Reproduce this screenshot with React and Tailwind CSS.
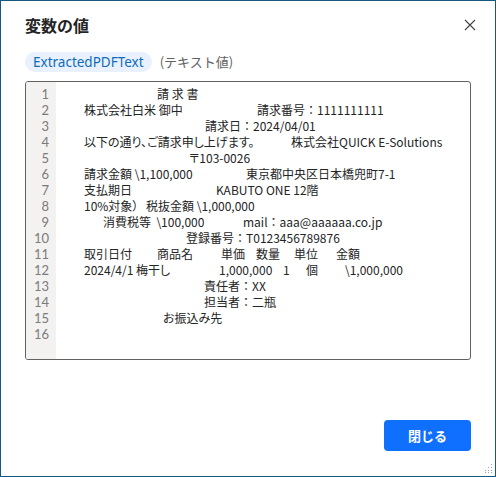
import React from 'react';

const JP = "font-['Noto_Sans_CJK_JP','Noto_Sans',sans-serif]";

// [x position in the dialog, text]
const lines = [
    [[157, '請 求 書']],
    [[84, '株式会社白米 御中'], [257, '請求番号：1111111111']],
    [[205, '請求日：2024/04/01']],
    [[84, '以下の通り、ご請求申し上げます。'], [291, '株式会社QUICK E-Solutions']],
    [[189, '〒103-0026']],
    [[84, '請求金額 \\1,100,000'], [246, '東京都中央区日本橋兜町7-1']],
    [[84, '支払期日'], [216, 'KABUTO ONE 12階']],
    [[84, '10%対象）'], [146, '税抜金額 \\1,000,000']],
    [[103, '消費税等  \\100,000'], [243, 'mail：aaa@aaaaaa.co.jp']],
    [[186, '登録番号：T0123456789876']],
    [[84, '取引日付'], [157, '商品名'], [221, '単価'], [256, '数量'], [294, '単位'], [336, '金額']],
    [[84, '2024/4/1 梅干し'], [219, '1,000,000'], [283, '1'], [306, '個'], [345, '\\1,000,000']],
    [[204, '責任者：XX']],
    [[204, '担当者：二瓶']],
    [[163, 'お振込み先']],
    [],
];

// full-width colon keeps its width, the rest of the kana is proportional
function Seg({ text }) {
    const parts = text.split('：');
    return parts.map((p, i) => (
        <React.Fragment key={i}>
            {i > 0 && <span className="[font-feature-settings:normal]">：</span>}
            {p}
        </React.Fragment>
    ));
}

function TextLine({ segs }) {
    return (
        <div className="flex h-[16px] items-center whitespace-pre leading-[16px]">
            {segs.map(([x, text], i) => {
                const next = segs[i + 1];
                const left = i === 0 ? x - 84 : 0;
                const width = next ? next[0] - x : undefined;
                return (
                    <span key={i} className="shrink-0" style={{ marginLeft: left, width }}>
                        <Seg text={text} />
                    </span>
                );
            })}
        </div>
    );
}

export default function App() {
    return (
        <div className={`relative flex h-[477px] w-[496px] flex-col border border-[#17597e] bg-white text-[#242424] ${JP}`}>
            <div className="flex h-[48px] items-center justify-between pl-6 pr-[19px]">
                <h1 className="text-[16px] font-bold leading-none text-[#242424]">変数の値</h1>
                <svg width="12" height="12" viewBox="0 0 12 12" className="text-[#424242]">
                    <path d="M1 1L11 11M11 1L1 11" stroke="currentColor" strokeWidth="1.1" />
                </svg>
            </div>

            <div className="mt-[3px] flex h-[20px] items-center gap-2 pl-6">
                <span className="flex h-[20px] items-center rounded-full bg-[#e8f1fd] px-[8px] font-['Noto_Sans',sans-serif] text-[13.5px] text-[#0f6cbd]">
                    ExtractedPDFText
                </span>
                <span className="text-[13px] text-[#616161]">(テキスト値)</span>
            </div>

            <div className="mx-6 mt-[9px] flex h-[279px] overflow-hidden rounded-[3px] border border-[#616161]">
                <div className="w-[30px] shrink-0 bg-[#f3f2f1] pt-[4px] pr-[7px] text-right font-['Lato',sans-serif] text-[13px] leading-[16px] text-[#7a7a7a]">
                    {lines.map((_, i) => (
                        <div key={i} className="h-[16px]">
                            {i + 1}
                        </div>
                    ))}
                </div>
                <div className="flex-1 pt-[4px] pl-[28px] text-[12px] text-[#242424] [font-feature-settings:'palt']">
                    {lines.map((segs, i) => (
                        <TextLine key={i} segs={segs} />
                    ))}
                </div>
            </div>

            <div className="flex flex-1 items-end justify-end pr-6 pb-[25px]">
                <button className="h-[31px] w-[87px] rounded-[4px] bg-[#0f6fff] text-[13px] font-bold text-white">
                    閉じる
                </button>
            </div>

            <svg width="10" height="10" viewBox="0 0 10 10" className="absolute right-[2px] bottom-[2px] text-[#a0a0a0]">
                <rect x="8" y="0" width="1" height="1" fill="currentColor" />
                <rect x="5" y="3" width="1" height="1" fill="currentColor" />
                <rect x="8" y="3" width="1" height="1" fill="currentColor" />
                <rect x="2" y="6" width="1" height="1" fill="currentColor" />
                <rect x="5" y="6" width="1" height="1" fill="currentColor" />
                <rect x="8" y="6" width="1" height="1" fill="currentColor" />
                <rect x="2" y="8" width="1" height="1" fill="currentColor" />
                <rect x="5" y="8" width="1" height="1" fill="currentColor" />
                <rect x="8" y="8" width="1" height="1" fill="currentColor" />
            </svg>
        </div>
    );
}
